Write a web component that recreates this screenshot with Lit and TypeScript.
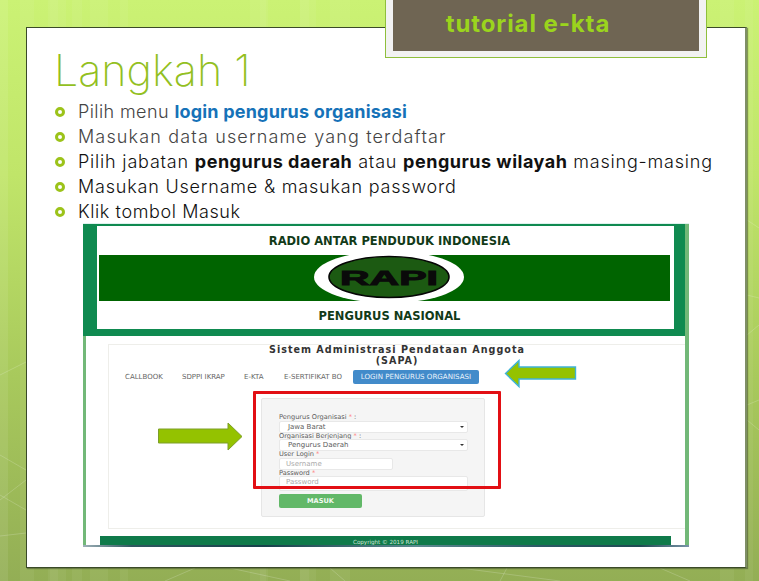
import { LitElement, html, css, svg } from "lit";
import { customElement } from "lit/decorators.js";

@customElement("app-root")
export class AppRoot extends LitElement {
  static styles = css`
    :host {
      display: block;
      width: 759px;
      height: 581px;
      overflow: hidden;
      position: relative;
      font-family: "Inter", "Liberation Sans", sans-serif;
      background: linear-gradient(180deg, #cbf274 0%, #c0e569 30%, #a8c95c 65%, #93ae55 100%);
    }
    * { box-sizing: border-box; }
    .bgdeco { position: absolute; inset: 0; width: 759px; height: 581px; }
    .stage { position: relative; padding: 27px 12px 13px 26px; height: 581px; display: flex; }
    .slide {
      flex: 1;
      background: #fff;
      border: 1px solid #3a4a28;
      border-right: 2px solid #7f8f66;
      box-shadow: 1px 1px 1px rgba(60,70,40,.5);
      padding: 17px 0 0 28px;
      display: flex;
      flex-direction: column;
      min-height: 0;
    }
    .tab {
      position: absolute; left: 385px; top: 0; width: 322px; height: 58px;
      background: #f2f2f2; border: 1px solid #8fbf3c; border-top: 0;
      padding: 0 7px 6px 7px; display: flex;
    }
    .tab-in {
      flex: 1; background: #6f6553; color: #9bd41d; font-weight: 700; font-size: 24px; line-height: 27px;
      display: flex; justify-content: center; padding: 10px 36px 0 0; letter-spacing: .9px;
    }
    h1 {
      margin: 0 0 0 -1px; font-weight: 200; color: #93c01f; font-size: 43px; line-height: 50px;
      letter-spacing: 0; height: 54px;
    }
    ul { list-style: none; margin: 0 0 1px; padding: 0; }
    li {
      display: flex; align-items: center; height: 25px; font-size: 18px; font-weight: 300; color: #111;
      white-space: pre; letter-spacing: .8px;
    }
    li.gray { color: #444; }
    li.l1 { letter-spacing: .4px; }
    li.l2 { letter-spacing: 1.15px; }
    li.l5 { letter-spacing: .6px; }
    .dot {
      width: 10px; height: 10px; border: 3px solid #9cc31a; border-radius: 50%;
      margin: 1px 13px 0 0; flex: none;
    }
    li b { font-weight: 700; color: #111; letter-spacing: .5px; }
    li b.blue { color: #1672b8; letter-spacing: .2px; }
    .shot {
      margin: -2px 0 0 28px; width: 606px; height: 324px; position: relative; overflow: hidden;
      border-top: 1px solid #dff2ee; background: #fff; display: flex; flex-direction: column;
      font-family: "DejaVu Sans", "Liberation Sans", sans-serif;
    }
    .hdr {
      background: #0f8a50; padding: 2px 11px 7px 14px; height: 112px; flex: none; display: flex;
      border-right: 4px solid #72b878;
    }
    .hdr-in {
      flex: 1; background: #fff; padding: 0 4px 0 2px; display: flex; flex-direction: column;
    }
    .t1, .t2 { font-weight: 700; color: #123a18; text-align: center; white-space: nowrap; padding-left: 10px; font-size: 11.5px; line-height: 13px; }
    .t1 { height: 29px; padding-top: 9px; }
    .band { height: 46px; background: #006400; position: relative; flex: none; }
    .band svg { position: absolute; left: 0; top: 0; width: 100%; height: 46px; overflow: visible; }
    .t2 { padding-top: 9px; }
    .logo { font-family: "Liberation Sans", sans-serif; font-weight: 700; font-size: 21px; fill: #0a0a0a; stroke: #0a0a0a; stroke-width: 1px; }
    .body {
      flex: 1; border-left: 3px solid #72b878; border-right: 4px solid #72b878;
      padding: 8px 0 0 22px; display: flex; flex-direction: column; min-height: 0; background: #fff;
    }
    .card {
      height: 185px; flex: none; border: 1px solid #eeeeea; border-right: 0; display: flex; flex-direction: column; align-items: center;
    }
    .ttl {
      width: 577px; text-align: center; font-weight: 700; font-size: 9.6px; line-height: 11px; color: #333;
      letter-spacing: 1px; margin-top: -1.5px; white-space: nowrap; flex: none;
    }
    nav {
      align-self: flex-start; display: flex; align-items: center; height: 14px; margin: 4.5px 0 0 16px; flex: none;
      font-size: 7px; color: #666; white-space: nowrap;
    }
    nav span.a { width: 57px; }
    nav span.b { width: 62px; }
    nav span.c { width: 40px; }
    nav span.d { width: 69px; }
    nav .on {
      width: 126px; height: 14px; background: #428bca; color: #e8f2fa; border-radius: 2px; text-align: center; line-height: 14px;
      font-size: 7.1px;
    }
    .panel {
      margin: 14px 0 0 152px; align-self: flex-start; width: 224px; height: 119px; background: #f5f5f5;
      border: 1px solid #e6e6e6; border-radius: 2px; padding: 15px 17px 0; flex: none;
      font-size: 7px; color: #5c5c5c; display: flex; flex-direction: column;
    }
    label { display: block; height: 6.5px; line-height: 6.5px; white-space: nowrap; font-size: 6.6px; }
    label i { color: #f88; font-style: normal; }
    .sel, .inp {
      display: flex; align-items: center; justify-content: space-between; background: #fff; border: 1px solid #e8e8e8;
      border-radius: 2px; height: 12px; width: 189px; padding: 0 3px 0 8px; flex: none;
    }
    .sel::after { content: ""; border: 2px solid transparent; border-top: 2.5px solid #333; border-bottom: 0; }
    .inp { color: #aaa; padding-left: 6px; }
    .inp.s { width: 114px; }
    .inp.tall { height: 15px; align-items: flex-start; padding-top: 1px; }
    .go {
      margin-top: 3px; width: 83px; height: 14px; background: #62b868; color: #f4faf4; border-radius: 2px;
      font-weight: 700; font-size: 6.6px; line-height: 14px; text-align: center; flex: none;
    }
    .foot {
      position: absolute; left: 17px; right: 18px; bottom: 2px; height: 9px; background: #0f7a4a; color: #cfe6d8;
      text-align: center; font-size: 5.6px; line-height: 12px; overflow: hidden;
    }
    .edge {
      position: absolute; left: 0; right: 0; bottom: 0; height: 2px;
      background: linear-gradient(90deg, #9fb0b8 0, #2f5860 8%, #16404a 30%, #5d8a90 55%, #2c5a66 75%, #1e4a52 92%, #7a93a8 100%);
    }
    .red { position: absolute; left: 253px; top: 391px; width: 248px; height: 98px; border: 3px solid #e20f14; border-radius: 1px; }
    .arrow { position: absolute; }
    .ar-r { left: 158px; top: 422px; }
    .ar-l { left: 504px; top: 359px; }
  `;

  private deco() {
    const strips = [[20,14],[48,10],[90,18],[120,8],[250,16],[300,9],[330,20],[720,14],[745,8],[50,16],[72,10],[300,16],[260,8]];
    return svg`
      ${strips.map(([x, w]) => svg`<rect x=${x} y="0" width=${w} height="581" fill="#fff" opacity=".05"/>`)}
      <rect x="0" y="0" width="8" height="581" fill="#fff" opacity=".08"/>
      <g stroke="#fff" stroke-width="1" opacity=".18" fill="none">
        <path d="M0 375 L26 362 M0 455 L26 470 M0 495 L26 510 M0 536 L26 533 M0 500 L26 480"/>
        <path d="M165 581 L195 568 M230 568 L290 581 M330 568 L345 581 M460 568 L560 581 M500 581 L507 568 M660 568 L690 581"/>
        <path d="M747 220 L759 228 M747 295 L759 298 M747 335 L759 325 M747 405 L759 400 M747 420 L759 430"/>
      </g>`;
  }

  render() {
    return html`
      <svg class="bgdeco" viewBox="0 0 759 581">${this.deco()}</svg>
      <div class="stage">
        <div class="slide">
          <h1>Langkah 1</h1>
          <ul>
            <li class="gray l1"><span class="dot"></span>Pilih menu <b class="blue">login pengurus organisasi</b></li>
            <li class="gray l2"><span class="dot"></span>Masukan data username yang terdaftar</li>
            <li><span class="dot"></span>Pilih jabatan <b>pengurus daerah</b> atau <b>pengurus wilayah</b> masing-masing</li>
            <li><span class="dot"></span>Masukan Username &amp; masukan password</li>
            <li class="l5"><span class="dot"></span>Klik tombol Masuk</li>
          </ul>
          <div class="shot">
            <div class="hdr">
              <div class="hdr-in">
                <div class="t1">RADIO ANTAR PENDUDUK INDONESIA</div>
                <div class="band">
                  <svg viewBox="0 0 571 46" preserveAspectRatio="none">
                    <ellipse cx="290" cy="22" rx="75" ry="26" fill="#fff"/>
                    <ellipse cx="290" cy="22" rx="60" ry="20.5" fill="#1c5a12" stroke="#050505" stroke-width="1.6"/>
                    <text class="logo" x="290" y="29.5" text-anchor="middle" textLength="98" lengthAdjust="spacingAndGlyphs">RAPI</text>
                  </svg>
                </div>
                <div class="t2">PENGURUS NASIONAL</div>
              </div>
            </div>
            <div class="body">
              <div class="card">
                <div class="ttl">Sistem Administrasi Pendataan Anggota<br />(SAPA)</div>
                <nav>
                  <span class="a">CALLBOOK</span><span class="b">SDPPI IKRAP</span><span class="c">E-KTA</span><span class="d">E-SERTIFIKAT BO</span>
                  <span class="on">LOGIN PENGURUS ORGANISASI</span>
                </nav>
                <div class="panel">
                  <label>Pengurus Organisasi <i>*</i> :</label>
                  <div class="sel">Jawa Barat</div>
                  <label>Organisasi Berjenjang <i>*</i> :</label>
                  <div class="sel">Pengurus Daerah</div>
                  <label>User Login <i>*</i></label>
                  <div class="inp s">Username</div>
                  <label>Password <i>*</i></label>
                  <div class="inp tall">Password</div>
                  <div class="go">MASUK</div>
                </div>
              </div>
            </div>
            <div class="foot">Copyright © 2019 RAPI</div>
            <div class="edge"></div>
          </div>
        </div>
      </div>
      <div class="tab"><div class="tab-in">tutorial e-kta</div></div>
      <div class="red"></div>
      <svg class="arrow ar-r" width="86" height="29" viewBox="0 0 86 29">
        <path d="M.5 7H70V1L84 14.5L70 28V21H.5Z" fill="#94c200" stroke="#7d9f28" stroke-width="1"/>
      </svg>
      <svg class="arrow ar-l" width="74" height="30" viewBox="0 0 74 30">
        <path d="M71.5 8H15V1.5L1.5 14.5L15 27.5V20H71.5Z" fill="#94c200" stroke="#3fb3d6" stroke-width="1.4"/>
      </svg>
    `;
  }
}
